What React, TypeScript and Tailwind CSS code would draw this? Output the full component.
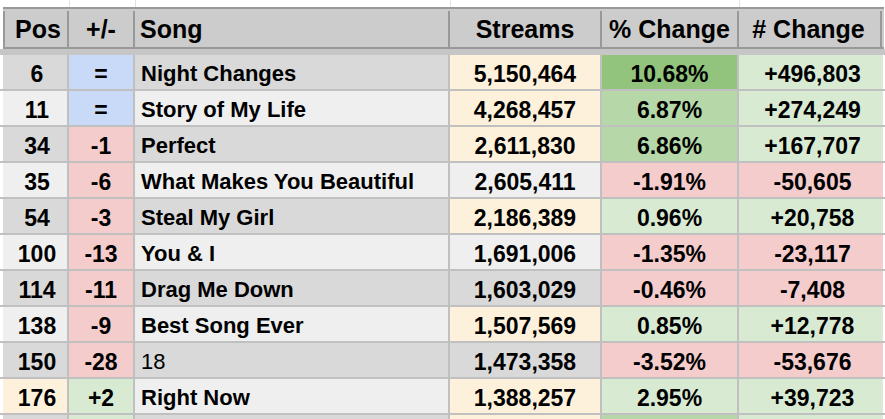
type Row = {
  pos: string;
  pm: string;
  song: string;
  streams: string;
  pct: string;
  num: string;
  posBg: string;
  pmBg: string;
  rowBg: string;
  streamsBg: string;
  pctBg: string;
  numBg: string;
  thin?: boolean;
};

const D9 = "bg-[#d9d9d9]";
const EF = "bg-[#efefef]";
const CREAM = "bg-[#fdf1dc]";
const BLUE = "bg-[#c9daf8]";
const RED = "bg-[#f4cccc]";
const GREEN = "bg-[#d9ead3]";
const GREEN2 = "bg-[#b6d7a8]";
const GREEN3 = "bg-[#93c47d]";

const rows: Row[] = [
  { pos: "6", pm: "=", song: "Night Changes", streams: "5,150,464", pct: "10.68%", num: "+496,803", posBg: D9, pmBg: BLUE, rowBg: D9, streamsBg: CREAM, pctBg: GREEN3, numBg: GREEN },
  { pos: "11", pm: "=", song: "Story of My Life", streams: "4,268,457", pct: "6.87%", num: "+274,249", posBg: EF, pmBg: BLUE, rowBg: EF, streamsBg: CREAM, pctBg: GREEN2, numBg: GREEN },
  { pos: "34", pm: "-1", song: "Perfect", streams: "2,611,830", pct: "6.86%", num: "+167,707", posBg: D9, pmBg: RED, rowBg: D9, streamsBg: CREAM, pctBg: GREEN2, numBg: GREEN },
  { pos: "35", pm: "-6", song: "What Makes You Beautiful", streams: "2,605,411", pct: "-1.91%", num: "-50,605", posBg: EF, pmBg: RED, rowBg: EF, streamsBg: EF, pctBg: RED, numBg: RED },
  { pos: "54", pm: "-3", song: "Steal My Girl", streams: "2,186,389", pct: "0.96%", num: "+20,758", posBg: D9, pmBg: RED, rowBg: D9, streamsBg: CREAM, pctBg: GREEN, numBg: GREEN },
  { pos: "100", pm: "-13", song: "You & I", streams: "1,691,006", pct: "-1.35%", num: "-23,117", posBg: EF, pmBg: RED, rowBg: EF, streamsBg: EF, pctBg: RED, numBg: RED },
  { pos: "114", pm: "-11", song: "Drag Me Down", streams: "1,603,029", pct: "-0.46%", num: "-7,408", posBg: D9, pmBg: RED, rowBg: D9, streamsBg: D9, pctBg: RED, numBg: RED },
  { pos: "138", pm: "-9", song: "Best Song Ever", streams: "1,507,569", pct: "0.85%", num: "+12,778", posBg: EF, pmBg: RED, rowBg: EF, streamsBg: CREAM, pctBg: GREEN, numBg: GREEN },
  { pos: "150", pm: "-28", song: "18", streams: "1,473,358", pct: "-3.52%", num: "-53,676", posBg: D9, pmBg: RED, rowBg: D9, streamsBg: D9, pctBg: RED, numBg: RED, thin: true },
  { pos: "176", pm: "+2", song: "Right Now", streams: "1,388,257", pct: "2.95%", num: "+39,723", posBg: CREAM, pmBg: GREEN, rowBg: EF, streamsBg: CREAM, pctBg: GREEN, numBg: GREEN },
  { pos: "", pm: "", song: "", streams: "", pct: "", num: "", posBg: D9, pmBg: GREEN, rowBg: D9, streamsBg: CREAM, pctBg: GREEN2, numBg: GREEN },
];

function DataRow({ r }: { r: Row }) {
  const cell = "flex h-full items-center justify-center border-r-2 border-[#c0c0c0] pt-[4px] text-[23px]";
  return (
    <div className="flex h-[36px] shrink-0 border-b-2 border-[#c0c0c0] pl-[3px] font-bold leading-none text-black">
      <div className={`${cell} w-[66px] pl-[4px] ${r.posBg}`}>{r.pos}</div>
      <div className={`${cell} w-[66px] ${r.pmBg}`}>{r.pm}</div>
      <div className={`flex h-full w-[315px] items-center border-r-2 border-[#c0c0c0] pl-[6px] pt-[4px] text-[22px] ${r.rowBg} ${r.thin ? "font-normal" : ""}`}>
        {r.song}
      </div>
      <div className={`${cell} w-[152px] ${r.streamsBg}`}>{r.streams}</div>
      <div className={`${cell} w-[137px] ${r.pctBg}`}>{r.pct}</div>
      <div className={`flex h-full w-[144px] items-center justify-center pl-[3px] pt-[4px] text-[23px] ${r.numBg}`}>{r.num}</div>
    </div>
  );
}

export default function App() {
  const head = "flex h-full items-center justify-center border-r-2 border-[#999999]";
  return (
    <div className="flex h-[419px] w-[885px] flex-col overflow-hidden bg-white font-['Liberation_Sans',Arial,sans-serif]">
      {/* gridlines of the sheet row above */}
      <div className="flex h-[7px] shrink-0 pl-[3px]">
        <div className="w-[67px] border-r border-[#e2e2e2]" />
        <div className="w-[66px] border-r border-[#e2e2e2]" />
        <div className="w-[315px] border-r border-[#e2e2e2]" />
        <div className="w-[289px] border-r border-[#e2e2e2]" />
      </div>

      <div className="flex h-[42px] w-[884px] shrink-0 pl-[3px]">
        <div className="flex w-full border-y-2 border-[#999999] bg-[#cccccc] pt-[2px] text-[25px] font-bold leading-none text-black">
          <div className={`${head} w-[66px] border-l-2 pl-[4px]`}>Pos</div>
          <div className={`${head} w-[66px]`}>+/-</div>
          <div className="flex h-full w-[315px] items-center border-r-2 border-[#999999] pl-[5px]">Song</div>
          <div className={`${head} w-[152px]`}>Streams</div>
          <div className={`${head} w-[137px]`}>% Change</div>
          <div className={`${head} w-[143px]`}>
            <span className="pr-[2px]"># Change</span>
          </div>
        </div>
      </div>

      <div className="h-[6px] shrink-0 bg-[#c6c6c6]" />

      {rows.map((r, i) => (
        <DataRow key={i} r={r} />
      ))}
    </div>
  );
}
